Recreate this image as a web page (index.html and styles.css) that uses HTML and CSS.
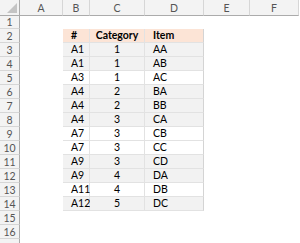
FILE: index.html
```html
<!DOCTYPE html>
<html>
<head>
<meta charset="utf-8">
<link rel="stylesheet" href="styles.css">
</head>
<body>
<div class="sheet">
  <div class="ch corner"></div>
  <div class="ch">A</div><div class="ch">B</div><div class="ch">C</div><div class="ch">D</div><div class="ch">E</div><div class="ch">F</div>

  <div class="rh">1</div><div class="c"></div><div class="c"></div><div class="c"></div><div class="c"></div><div class="c"></div><div class="c"></div>

  <div class="rh">2</div><div class="c"></div><div class="t hd l">#</div><div class="t hd m">Category</div><div class="t hd l r">Item</div><div class="c"></div><div class="c"></div>

  <div class="rh">3</div><div class="c"></div><div class="t g l">A1</div><div class="t g m">1</div><div class="t g l r">AA</div><div class="c"></div><div class="c"></div>
  <div class="rh">4</div><div class="c"></div><div class="t g l">A1</div><div class="t g m">1</div><div class="t g l r">AB</div><div class="c"></div><div class="c"></div>
  <div class="rh">5</div><div class="c"></div><div class="t l">A3</div><div class="t m">1</div><div class="t l r">AC</div><div class="c"></div><div class="c"></div>
  <div class="rh">6</div><div class="c"></div><div class="t g l">A4</div><div class="t g m">2</div><div class="t g l r">BA</div><div class="c"></div><div class="c"></div>
  <div class="rh">7</div><div class="c"></div><div class="t g l">A4</div><div class="t g m">2</div><div class="t g l r">BB</div><div class="c"></div><div class="c"></div>
  <div class="rh">8</div><div class="c"></div><div class="t g l">A4</div><div class="t g m">3</div><div class="t g l r">CA</div><div class="c"></div><div class="c"></div>
  <div class="rh">9</div><div class="c"></div><div class="t l">A7</div><div class="t m">3</div><div class="t l r">CB</div><div class="c"></div><div class="c"></div>
  <div class="rh">10</div><div class="c"></div><div class="t l">A7</div><div class="t m">3</div><div class="t l r">CC</div><div class="c"></div><div class="c"></div>
  <div class="rh">11</div><div class="c"></div><div class="t g l">A9</div><div class="t g m">3</div><div class="t g l r">CD</div><div class="c"></div><div class="c"></div>
  <div class="rh">12</div><div class="c"></div><div class="t g l">A9</div><div class="t g m">4</div><div class="t g l r">DA</div><div class="c"></div><div class="c"></div>
  <div class="rh">13</div><div class="c"></div><div class="t l">A11</div><div class="t m">4</div><div class="t l r">DB</div><div class="c"></div><div class="c"></div>
  <div class="rh">14</div><div class="c"></div><div class="t g l">A12</div><div class="t g m">5</div><div class="t g l r">DC</div><div class="c"></div><div class="c"></div>

  <div class="rh">15</div><div class="c"></div><div class="c"></div><div class="c"></div><div class="c"></div><div class="c"></div><div class="c"></div>
  <div class="rh">16</div><div class="c"></div><div class="c"></div><div class="c"></div><div class="c"></div><div class="c"></div><div class="c"></div>
  <div class="rh"></div><div class="c"></div><div class="c"></div><div class="c"></div><div class="c"></div><div class="c"></div><div class="c"></div>
</div>
</body>
</html>
```

FILE: styles.css
```css
html, body {
  margin: 0;
  padding: 0;
  background: #ffffff;
  overflow: hidden;
}

.sheet {
  display: grid;
  grid-template-columns: 20px 43px 27px 55px 59px 46px 49px;
  grid-template-rows: 16px 13px repeat(16, 14px);
  font-family: Lato, "Liberation Sans", sans-serif;
  font-size: 10.5px;
  color: #000;
  width: 300px;
}

.ch {
  background: #f3f3f3;
  border-right: 1px solid #d6d6d6;
  border-bottom: 1px solid #ababab;
  color: #555;
  display: flex;
  align-items: center;
  justify-content: center;
}

.corner {
  position: relative;
  border-right: 1px solid #ababab;
}

.corner::after {
  content: "";
  position: absolute;
  right: 2px;
  bottom: 2px;
  width: 0;
  height: 0;
  border-left: 10px solid transparent;
  border-bottom: 10px solid #c4c4c4;
}

.rh {
  background: #f3f3f3;
  border-right: 1px solid #ababab;
  border-bottom: 1px solid #d6d6d6;
  color: #555;
  display: flex;
  align-items: center;
  justify-content: center;
}

.c {
  background: #ffffff;
}

.t {
  background: #ffffff;
  border-bottom: 1px solid #e2e2e2;
  border-right: 1px solid #e2e2e2;
  display: flex;
  align-items: center;
  white-space: nowrap;
  line-height: 1;
}

.t.g {
  background: #f2f2f2;
}

.t.hd {
  background: #fce4d6;
  font-weight: bold;
}

.t.l {
  justify-content: flex-start;
  padding-left: 8px;
}

.t.m {
  justify-content: center;
}

.t.r {
  border-right: 1px solid #d4d4d4;
}
```
